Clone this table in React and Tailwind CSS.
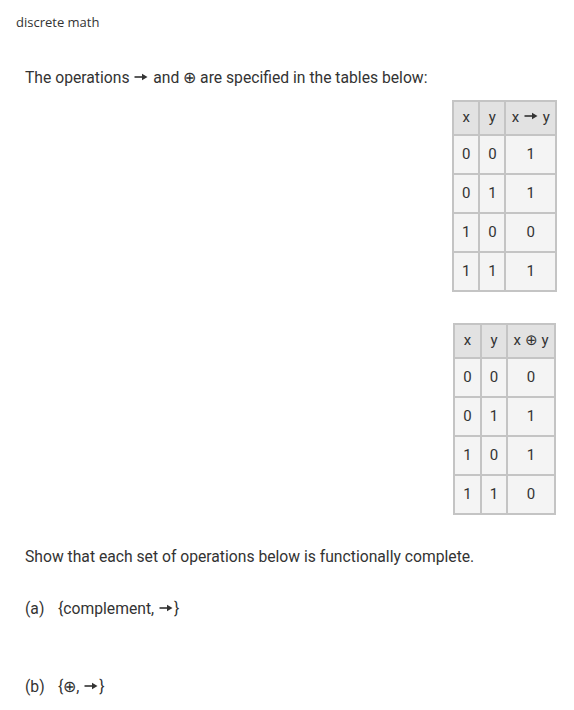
import React from 'react';

const arrowRows = [
  ['0', '0', '1'],
  ['0', '1', '1'],
  ['1', '0', '0'],
  ['1', '1', '1'],
];

const xorRows = [
  ['0', '0', '0'],
  ['0', '1', '1'],
  ['1', '0', '1'],
  ['1', '1', '0'],
];

// short arrow with a filled head, as the source renders it
const Arrow = () => (
  <svg width="14" height="10" viewBox="0 0 14 10" className="inline-block align-[1px] mx-[1px]">
    <line x1="0.5" y1="5" x2="9" y2="5" stroke="currentColor" strokeWidth="1.6" />
    <path d="M8 1.8 L13.5 5 L8 8.2 Z" fill="currentColor" />
  </svg>
);

const TruthTable = ({ op, rows, widths }) => {
  return (
    <table className="table-fixed border-collapse border-2 border-[#c4c4c4] text-[15px] text-[#333]">
      <colgroup>
        {widths.map((w, i) => (
          <col key={i} style={{ width: w }} />
        ))}
      </colgroup>
      <thead>
        <tr className="h-[34px] bg-[#e2e2e2]">
          <th className="border-2 border-[#c4c4c4] p-0 font-normal text-center">x</th>
          <th className="border-2 border-[#c4c4c4] p-0 font-normal text-center">y</th>
          <th className="border-2 border-[#c4c4c4] p-0 font-normal text-center whitespace-nowrap">x {op} y</th>
        </tr>
      </thead>
      <tbody>
        {rows.map((r, i) => (
          <tr key={i} className="h-[39px] bg-[#f4f4f4]">
            {r.map((c, j) => (
              <td key={j} className="border-2 border-[#c4c4c4] p-0 text-center">{c}</td>
            ))}
          </tr>
        ))}
      </tbody>
    </table>
  );
};

const App = () => {
  return (
    <div className="w-[574px] h-[710px] bg-white text-[#333] font-['Roboto',sans-serif] overflow-hidden">
      <div className="pl-4 pt-[13px] text-[13px] text-[#333] font-['Open_Sans',sans-serif]">discrete math</div>

      <p className="pl-[25px] mt-[35px] text-[15.7px] leading-[20px]">
        The operations <Arrow /> and ⊕ are specified in the tables below:
      </p>

      <div className="flex justify-end pr-[17px] mt-[12px]">
        <div className="flex flex-col items-center gap-[31px] w-[105px]">
          <TruthTable op={<Arrow />} rows={arrowRows} widths={['27px', '27px', '51px']} />
          <TruthTable op="⊕" rows={xorRows} widths={['27px', '26px', '48px']} />
        </div>
      </div>

      <p className="pl-[25px] mt-[32px] text-[15.7px] leading-[20px]">
        Show that each set of operations below is functionally complete.
      </p>

      <div className="pl-[25px] mt-[32px] flex text-[15.7px] leading-[20px]">
        <span className="w-[33px]">(a)</span>
        <span>{'{complement, '}<Arrow />{'}'}</span>
      </div>

      <div className="pl-[25px] mt-[58px] flex text-[15.7px] leading-[20px]">
        <span className="w-[33px]">(b)</span>
        <span>{'{⊕, '}<Arrow />{'}'}</span>
      </div>
    </div>
  );
};

export default App;
